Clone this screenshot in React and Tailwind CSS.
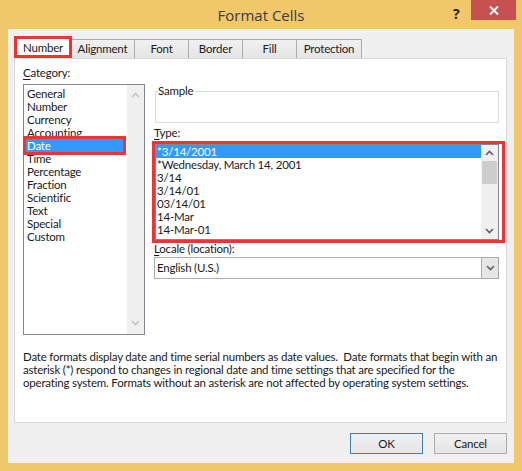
import React from "react";

const font = { fontFamily: 'Lato, "Open Sans", sans-serif' };
const titleFont = { fontFamily: '"Open Sans", "Noto Sans", sans-serif' };

function ChevUp({ color = "#606060" }) {
  return (
    <svg width="9" height="6" viewBox="0 0 9 6">
      <path d="M1 5 L4.5 1.5 L8 5" fill="none" stroke={color} strokeWidth="1.6" />
    </svg>
  );
}
function ChevDown({ color = "#606060" }) {
  return (
    <svg width="9" height="6" viewBox="0 0 9 6">
      <path d="M1 1 L4.5 4.5 L8 1" fill="none" stroke={color} strokeWidth="1.6" />
    </svg>
  );
}

const categories = [
  "General",
  "Number",
  "Currency",
  "Accounting",
  "Date",
  "Time",
  "Percentage",
  "Fraction",
  "Scientific",
  "Text",
  "Special",
  "Custom",
];

const types = [
  "*3/14/2001",
  "*Wednesday, March 14, 2001",
  "3/14",
  "3/14/01",
  "03/14/01",
  "14-Mar",
  "14-Mar-01",
];

const tabs = ["Alignment", "Font", "Border", "Fill", "Protection"];
const tabW = { Alignment: "w-[64px]", Font: "w-[54px]", Border: "w-[54px]", Fill: "w-[54px]", Protection: "w-[65px]" };

export default function App() {
  return (
    <div
      className="w-[522px] h-[471px] bg-[#f0c76b] flex flex-col text-[11.5px] tracking-[-0.2px] text-[#1a1a1a]"
      style={font}
    >
      {/* Title bar */}
      <div className="relative h-[29px] flex items-center justify-center shrink-0">
        <span className="text-[15px] tracking-normal text-[#3c3c3c] mt-[1px]" style={titleFont}>Format Cells</span>
        <span className="absolute left-[453px] top-[3px] text-[14px] font-bold text-[#222]" style={titleFont}>?</span>
        <div className="absolute left-[471px] top-0 w-[45px] h-[20px] bg-[#c75050] flex items-center justify-center">
          <svg width="10" height="9" viewBox="0 0 10 9">
            <path d="M1 0.5 L9 8.5 M9 0.5 L1 8.5" stroke="#fff" strokeWidth="2" />
          </svg>
        </div>
      </div>

      {/* Dialog body */}
      <div className="mx-[8px] h-[434px] bg-[#f0f0f0] flex flex-col">
        {/* Tabs */}
        <div className="flex items-end h-[29px] pl-[7px] shrink-0">
          <div className="relative w-[56px] h-[21px] bg-white border border-b-0 border-[#d9d9d9] flex items-center justify-center">
            <span>Number</span>
            <div className="absolute -left-[2px] -top-[2px] w-[58px] h-[22px] border-[3px] border-[#ee3333]" />
          </div>
          {tabs.map((t) => (
            <div
              key={t}
              className={`${tabW[t]} h-[19px] border border-b-0 border-l-0 border-[#acacac] bg-gradient-to-b from-[#f0f0f0] to-[#e5e5e5] flex items-center justify-center`}
            >
              {t}
            </div>
          ))}
        </div>

        {/* Panel */}
        <div className="ml-[6px] w-[493px] h-[365px] bg-white border border-[#d9d9d9] flex flex-col pl-[8px]">
          <div className="flex">
            {/* Left column */}
            <div className="w-[122px] flex flex-col">
              <div className="pt-[7px] h-[25px] leading-[14px]">
                <span className="underline underline-offset-2">C</span>ategory:
              </div>
              <div className="h-[251px] border border-[#828790] flex">
                <div className="flex-1 pl-[2px] pt-[2px]">
                  {categories.map((c) =>
                    c === "Date" ? (
                      <div key={c} className="relative h-[13px] leading-[13px] bg-[#3399ff] text-white pl-[1px] mr-[4px]">
                        {c}
                        <div className="absolute -left-[3px] -top-[3px] -right-[3px] -bottom-[3px] border-[3px] border-[#ee3333]" />
                      </div>
                    ) : (
                      <div key={c} className="h-[13px] leading-[13px] pl-[1px]">
                        {c}
                      </div>
                    )
                  )}
                </div>
                <div className="w-[17px] bg-[#f0f0f0] flex flex-col items-center justify-between pt-[7px] pb-[8px]">
                  <ChevUp color="#c4c4c4" />
                  <ChevDown color="#c4c4c4" />
                </div>
              </div>
            </div>

            {/* Right column */}
            <div className="ml-[9px] w-[345px] flex flex-col">
              <div className="relative mt-[32px] h-[32px] border border-[#dcdcdc] ml-[1px]">
                <span className="absolute left-[2px] -top-[8px] bg-white pr-[2px] leading-[14px]">Sample</span>
              </div>
              <div className="h-[21px] leading-[20px]">
                <span className="underline underline-offset-2">T</span>ype:
              </div>
              <div className="relative ml-[1px] h-[96px] border border-[#828790] flex">
                <div className="flex-1">
                  {types.map((t, i) => (
                    <div
                      key={t}
                      className={`h-[13px] leading-[13px] pl-[1px] ${i === 0 ? "bg-[#3399ff] text-white" : ""}`}
                    >
                      {t}
                    </div>
                  ))}
                </div>
                <div className="w-[17px] bg-[#f0f0f0] flex flex-col items-center">
                  <div className="h-[16px] flex items-center"><ChevUp /></div>
                  <div className="w-[15px] h-[23px] bg-[#cdcdcd]" />
                  <div className="flex-1" />
                  <div className="h-[16px] flex items-center"><ChevDown /></div>
                </div>
                <div className="absolute -left-[4px] -top-[4px] -right-[7px] -bottom-[4px] border-[3px] border-[#ee3333]" />
              </div>
              <div className="h-[17px] leading-[17px]">
                <span className="underline underline-offset-2">L</span>ocale (location):
              </div>
              <div className="h-[22px] border border-[#acacac] flex items-center">
                <span className="flex-1 pl-[2px]">English (U.S.)</span>
                <div className="w-[17px] h-[20px] bg-[#e6e6e6] border-l border-[#acacac] flex items-center justify-center">
                  <ChevDown />
                </div>
              </div>
            </div>
          </div>

          {/* Description */}
          <div className="mt-[15px] leading-[13px] whitespace-nowrap">
            Date formats display date and time serial numbers as date values.&nbsp; Date formats that begin with an
            <br />
            asterisk (*) respond to changes in regional date and time settings that are specified for the
            <br />
            operating system. Formats without an asterisk are not affected by operating system settings.
          </div>
        </div>

        {/* Buttons */}
        <div className="flex justify-end gap-[11px] pr-[7px] mt-[10px]">
          <div className="w-[73px] h-[21px] border border-[#3c7fb1] bg-gradient-to-b from-[#f0f0f0] to-[#e5e5e5] flex items-center justify-center">
            OK
          </div>
          <div className="w-[73px] h-[21px] border border-[#acacac] bg-gradient-to-b from-[#f0f0f0] to-[#e5e5e5] flex items-center justify-center">
            Cancel
          </div>
        </div>
      </div>
    </div>
  );
}
